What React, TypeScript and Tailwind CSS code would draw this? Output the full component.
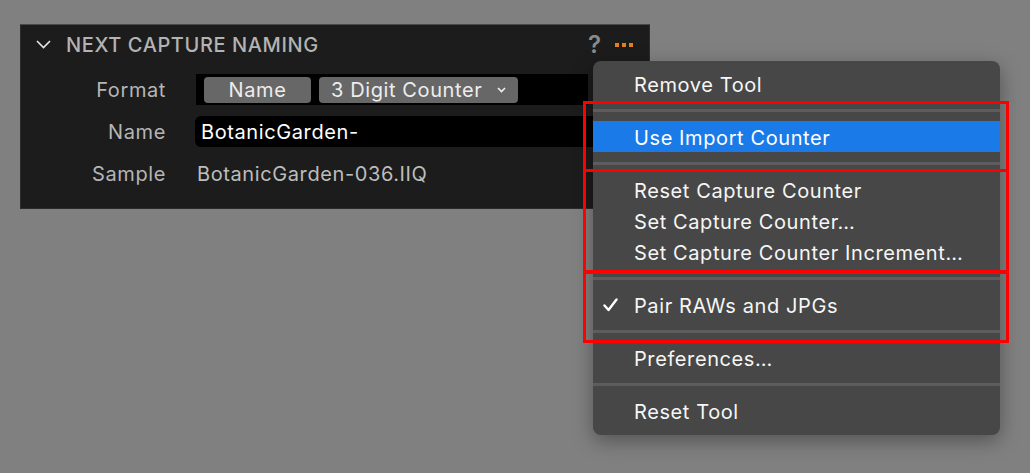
const FONT = "font-['Inter','Liberation_Sans',sans-serif]";

function Separator() {
  return (
    <div className="py-[9.5px]">
      <div className="h-[3px] bg-[#5d5d5d]" />
    </div>
  );
}

function MenuItem({ label, checked, active }: { label: string; checked?: boolean; active?: boolean }) {
  return (
    <div className={`relative h-[31px] flex items-center pl-[41px] pt-[3px] text-[20px] tracking-[0.6px] ${active ? "bg-[#1a7ae8] text-white" : "text-[#f6f6f6]"}`}>
      {checked && (
        <svg width="15" height="14" viewBox="0 0 15 14" className="absolute left-[10px] top-[9px]">
          <path d="M1.5 7.5 L5.5 12 L13.5 1.5" fill="none" stroke="#ffffff" strokeWidth="2.4" strokeLinecap="round" strokeLinejoin="round" />
        </svg>
      )}
      {label}
    </div>
  );
}

export default function App() {
  return (
    <div className={`relative w-[1030px] h-[473px] bg-[#808080] overflow-hidden pt-[24px] pl-[20px] ${FONT}`}>
      {/* Tool panel */}
      <div className="w-[630px] h-[185px] bg-[#1c1c1c] border border-[#2c2c2c] border-t-[#4a4a4a]">
        <div className="h-[39px] flex items-center pl-[15px] pr-[16px]">
          <svg width="15" height="9" viewBox="0 0 15 9" className="mr-[15px]">
            <path d="M1 1 L7.5 7.5 L14 1" fill="none" stroke="#e6e6e6" strokeWidth="1.6" />
          </svg>
          <span className="text-[20px] font-medium text-[#b3b3b3] tracking-[0.6px]">NEXT CAPTURE NAMING</span>
          <span className="ml-auto text-[24px] font-semibold text-[#8a8a8a] leading-none">?</span>
          <div className="ml-[14px] flex gap-[3px] pt-[1px]">
            <div className="w-[4px] h-[4px] bg-[#e57e1c]" />
            <div className="w-[4px] h-[4px] bg-[#e57e1c]" />
            <div className="w-[4px] h-[4px] bg-[#e57e1c]" />
          </div>
        </div>

        <div className="mt-[10px] flex flex-col gap-[11px] text-[20px] tracking-[0.6px]">
          {/* Format */}
          <div className="flex items-center">
            <div className="w-[145px] text-right text-[#b5b5b5]">Format</div>
            <div className="ml-[30px] w-[392px] h-[31px] bg-black flex items-center gap-[8px] pl-[8px]">
              <div className="w-[107px] h-[26px] rounded-[4px] bg-[#676767] text-[#ededed] flex items-center justify-center pt-[1px]">Name</div>
              <div className="w-[199px] h-[26px] rounded-[4px] bg-[#676767] text-[#ededed] flex items-center pl-[12px] pt-[1px]">
                3 Digit Counter
                <svg width="9" height="6" viewBox="0 0 9 6" className="ml-[15px]">
                  <path d="M1 1 L4.5 4.5 L8 1" fill="none" stroke="#f0f0f0" strokeWidth="1.6" />
                </svg>
              </div>
            </div>
          </div>

          {/* Name */}
          <div className="flex items-center">
            <div className="w-[145px] text-right text-[#b5b5b5]">Name</div>
            <div className="ml-[29px] w-[410px] h-[31px] bg-black rounded-l-[6px] flex items-center pl-[6px] pt-[1px] text-white">BotanicGarden-</div>
          </div>

          {/* Sample */}
          <div className="flex items-center h-[31px]">
            <div className="w-[145px] text-right text-[#b5b5b5]">Sample</div>
            <div className="ml-[31px] text-[#bdbdbd]">BotanicGarden-036.IIQ</div>
          </div>
        </div>
      </div>

      {/* Context menu */}
      <div className="absolute left-[593px] top-[61px] w-[407px] h-[374px] rounded-[8px] bg-[#474747] pt-[7px] shadow-[0_6px_20px_rgba(0,0,0,0.35)] overflow-hidden">
        <MenuItem label="Remove Tool" />
        <Separator />
        <MenuItem label="Use Import Counter" active />
        <Separator />
        <MenuItem label="Reset Capture Counter" />
        <MenuItem label="Set Capture Counter…" />
        <MenuItem label="Set Capture Counter Increment…" />
        <Separator />
        <MenuItem label="Pair RAWs and JPGs" checked />
        <Separator />
        <MenuItem label="Preferences…" />
        <Separator />
        <MenuItem label="Reset Tool" />
      </div>

      {/* Red annotation boxes */}
      <div className="absolute left-[583px] top-[101px] w-[426px] h-[71px] border-[3px] border-[#ff0000]" />
      <div className="absolute left-[583px] top-[169px] w-[426px] h-[105px] border-[3px] border-[#ff0000]" />
      <div className="absolute left-[583px] top-[270px] w-[426px] h-[73px] border-[3px] border-[#ff0000]" />
    </div>
  );
}
